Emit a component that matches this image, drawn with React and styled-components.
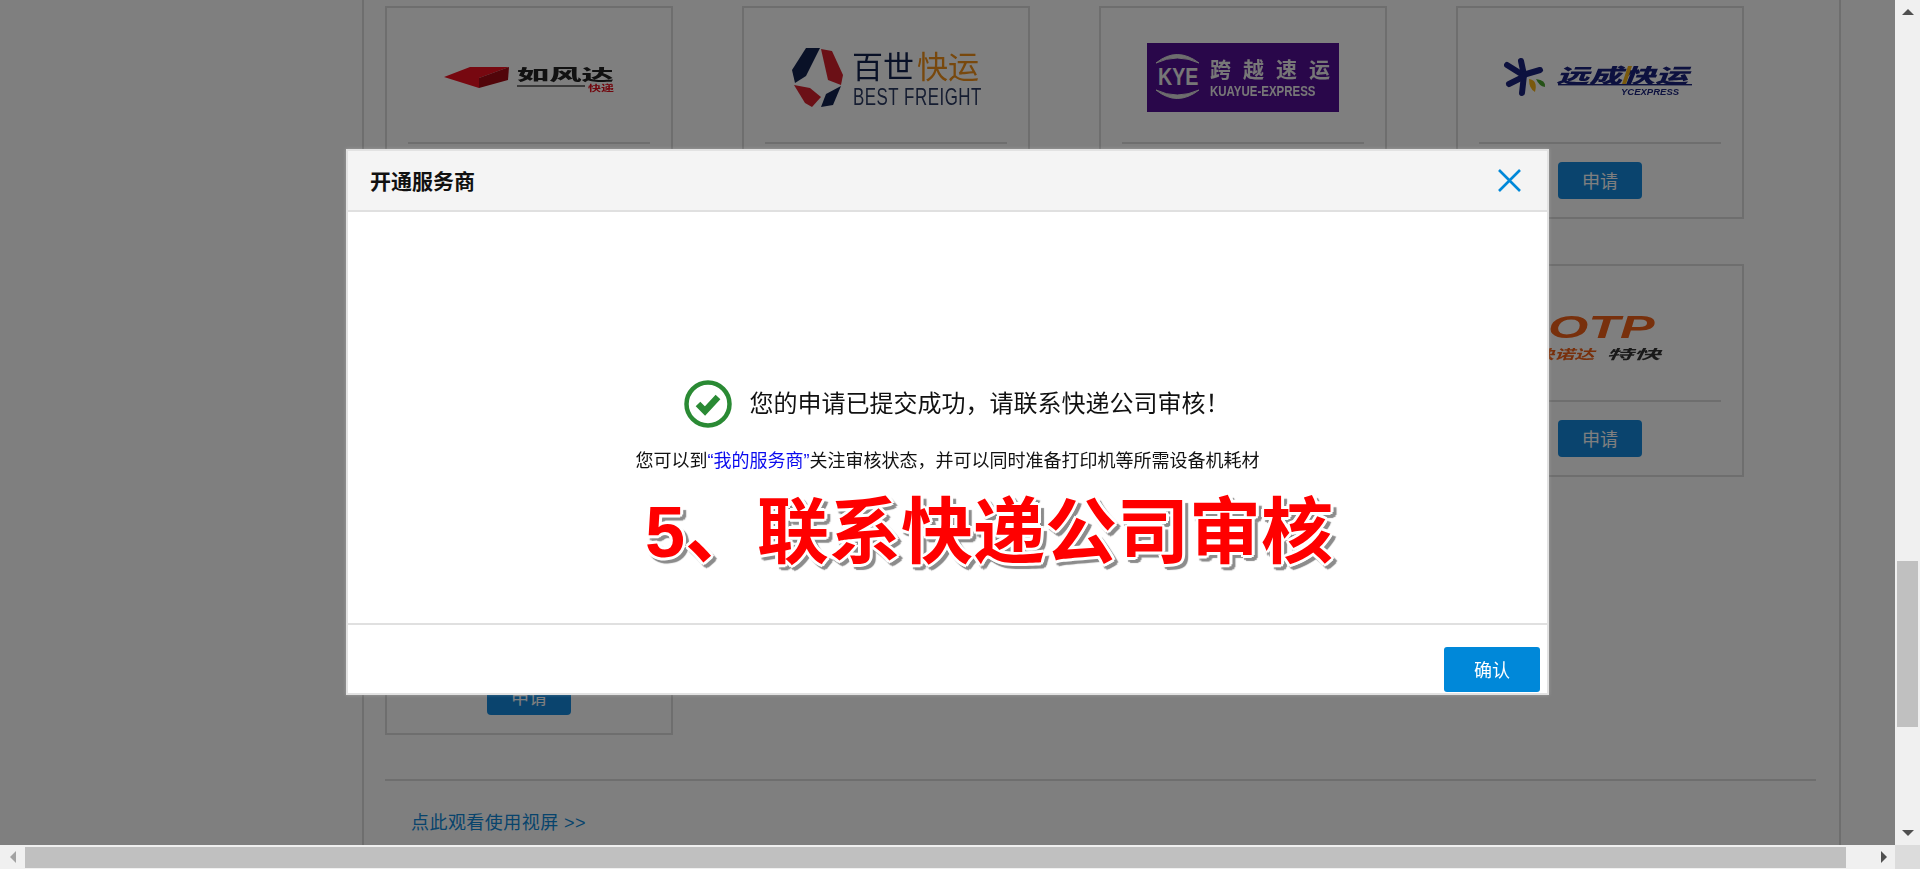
import React from "react";
import styled, { createGlobalStyle } from "styled-components";

const GlobalStyle = createGlobalStyle`
  html, body {
    margin: 0;
    padding: 0;
    overflow: hidden;
    background: #fff;
    font-family: "Liberation Sans", "Noto Sans CJK SC", sans-serif;
  }
  * {
    box-sizing: border-box;
  }
`;

const Screen = styled.div`
  width: 1920px;
  height: 869px;
  display: flex;
  flex-direction: column;
  overflow: hidden;
`;

const TopRow = styled.div`
  display: flex;
  height: 845px;
`;

const Viewport = styled.div`
  position: relative;
  width: 1895px;
  height: 845px;
  overflow: hidden;
  background: #fff;
`;

const Panel = styled.div`
  width: 1479px;
  height: 845px;
  margin-left: 362px;
  padding: 6px 0 0 21px;
  border-left: 2px solid #dcdcdc;
  border-right: 2px solid #dcdcdc;
`;

const CardGrid = styled.div`
  display: grid;
  grid-template-columns: repeat(4, 288px);
  column-gap: 69px;
  row-gap: 45px;
`;

const Card = styled.div`
  height: 213px;
  border: 2px solid #dcdcdc;
  display: flex;
  flex-direction: column;
  align-items: center;
`;

const LogoArea = styled.div`
  height: 134px;
  width: 100%;
  padding-top: 5px;
  display: flex;
  align-items: center;
  justify-content: center;
`;

const LogoSvg = styled.svg`
  display: block;
  filter: blur(0.7px);
`;

const CardLine = styled.div`
  width: 242px;
  height: 2px;
  background: #dcdcdc;
`;

const ApplyButton = styled.button`
  width: 84px;
  height: 37px;
  margin-top: 18px;
  padding: 0 0 2px;
  border: 0;
  border-radius: 4px;
  background: #1489dc;
  color: #fff;
  font: 18px "Liberation Sans", "Noto Sans CJK SC", sans-serif;
`;

const Rule = styled.div`
  width: 1431px;
  height: 2px;
  margin-top: 44px;
  background: #dcdcdc;
`;

const VideoLink = styled.a`
  display: block;
  margin: 30px 0 0 26px;
  font-size: 18px;
  line-height: 24px;
  letter-spacing: 0.45px;
  color: #0f88d8;
`;

const Overlay = styled.div`
  position: absolute;
  inset: 0;
  background: rgba(0, 0, 0, 0.5);
`;

const Modal = styled.div`
  position: absolute;
  left: 346px;
  top: 149px;
  width: 1203px;
  height: 546px;
  display: flex;
  flex-direction: column;
  background: #fff;
  border: 2px solid #e2e2e2;
  box-shadow: 0 0 3px rgba(255, 255, 255, 0.25);
`;

const ModalHeader = styled.div`
  height: 61px;
  flex: none;
  display: flex;
  align-items: center;
  justify-content: space-between;
  padding: 0 26px 0 22px;
  background: #f4f4f4;
  border-bottom: 2px solid #e0e0e0;
`;

const ModalTitle = styled.div`
  font-size: 21px;
  font-weight: 700;
  color: #111;
  margin-bottom: 2px;
`;

const ModalBody = styled.div`
  flex: 1;
  padding-top: 168px;
  display: flex;
  flex-direction: column;
  align-items: center;
`;

const SuccessRow = styled.div`
  display: flex;
  align-items: center;
  gap: 18px;
  height: 48px;
`;

const SuccessText = styled.div`
  font-size: 24px;
  color: #111;
  margin: 0 -18px 6px 0;
`;

const HintText = styled.div`
  margin-top: 20px;
  font-size: 18px;
  line-height: 27px;
  color: #111;
`;

const HintLink = styled.span`
  color: #0a0aee;
`;

const StepBanner = styled.div`
  margin: 17px 0 0 83px;
  font-size: 72px;
  font-weight: 700;
  line-height: 80px;
  color: #f00;
  white-space: nowrap;
  text-shadow:
    3px 0 0 #fff, -3px 0 0 #fff, 0 3px 0 #fff, 0 -3px 0 #fff,
    2px 2px 0 #fff, -2px 2px 0 #fff, 2px -2px 0 #fff, -2px -2px 0 #fff,
    5px 5px 1px #8c8c8c, 3px 6px 1px #8c8c8c, 6px 3px 1px #8c8c8c, 1px 5px 1px #9a9a9a;
`;

const ModalFooter = styled.div`
  height: 70px;
  flex: none;
  display: flex;
  align-items: flex-end;
  justify-content: flex-end;
  padding: 0 7px 1px 0;
  border-top: 2px solid #e0e0e0;
`;

const ConfirmButton = styled.button`
  width: 96px;
  height: 45px;
  padding: 0 0 2px;
  border: 0;
  border-radius: 3px;
  background: #0088d9;
  color: #fff;
  font: 18px "Liberation Sans", "Noto Sans CJK SC", sans-serif;
`;

const VTrack = styled.div`
  width: 25px;
  height: 845px;
  display: flex;
  flex-direction: column;
  align-items: center;
  background: #f0f0f0;
`;

const VThumb = styled.div`
  width: 21px;
  height: 166px;
  flex: none;
  margin: 537px 0 auto;
  background: #c0c0c0;
`;

const HBar = styled.div`
  height: 24px;
  display: flex;
  background: #f0f0f0;
`;

const HThumb = styled.div`
  width: 1821px;
  height: 21px;
  margin-top: 2px;
  background: #c0c0c0;
`;

const ArrowCell = styled.div`
  width: ${(p) => p.$w}px;
  height: 24px;
  flex: none;
  display: flex;
  align-items: center;
  justify-content: center;
  padding-left: ${(p) => p.$pad || 0}px;
`;

const Corner = styled.div`
  width: 25px;
  height: 24px;
  background: #dcdcdc;
`;

const Triangle = styled.div`
  width: 0;
  height: 0;
  border-style: solid;
  border-color: transparent;
  ${(p) =>
    p.$dir === "up" &&
    "border-width: 0 6px 6px 6px; border-bottom-color: #505050;"}
  ${(p) =>
    p.$dir === "down" &&
    "border-width: 6px 6px 0 6px; border-top-color: #505050;"}
  ${(p) =>
    p.$dir === "left" &&
    "border-width: 6px 6px 6px 0; border-right-color: #a3a3a3;"}
  ${(p) =>
    p.$dir === "right" &&
    "border-width: 6px 0 6px 6px; border-left-color: #505050;"}
`;

const cjk = '"Noto Sans CJK SC", sans-serif';
const latin = '"Liberation Sans", sans-serif';

const RufengdaLogo = () => (
  <LogoSvg width="185" height="45" viewBox="0 0 185 45">
    <polygon points="7,22 33,12 72,12 42,23 42,33" fill="#ee1020" />
    <polygon points="72,12 71,25 42,33 42,23" fill="#a40a14" />
    <text transform="translate(80 25) scale(2.15 1)" fontFamily={cjk} fontSize="15" fontWeight="900" fill="#222">如风达</text>
    <rect x="80" y="30" width="68" height="2" fill="#777" />
    <text x="151" y="36" fontFamily={cjk} fontSize="8" fontWeight="700" fill="#e30f1c" textLength="26" lengthAdjust="spacingAndGlyphs">快递</text>
  </LogoSvg>
);

const BestLogo = () => (
  <LogoSvg width="200" height="72" viewBox="0 0 200 72">
    <polygon points="6,28 20,6 34,6 20,34 9,41" fill="#12234f" />
    <polygon points="35,7 46,9 57,33 55,43 42,38" fill="#d6202c" />
    <polygon points="8,43 24,46 35,55 26,65 19,61" fill="#d6202c" />
    <polygon points="40,52 55,44 47,63 35,65" fill="#12234f" />
    <text x="66" y="36" fontFamily={cjk} fontSize="31" fill="#12234f">百世</text>
    <text x="131" y="36" fontFamily={cjk} fontSize="31" fill="#f0911a">快运</text>
    <text transform="translate(67 63) scale(0.735 1)" fontFamily={latin} fontSize="23" fill="#2b3a63" letterSpacing="0.7">BEST FREIGHT</text>
  </LogoSvg>
);

const KyeLogo = () => (
  <LogoSvg width="198" height="75" viewBox="0 0 198 75">
    <rect x="3" y="3" width="192" height="69" fill="#520e94" />
    <path d="M12 23 Q33 6 55 23 Q33 13 12 23Z" fill="#ddd" stroke="#ddd" />
    <path d="M12 50 Q33 67 55 50 Q33 60 12 50Z" fill="#ddd" stroke="#ddd" />
    <text transform="translate(14 45) scale(0.82 1)" fontFamily={latin} fontSize="24" fontWeight="700" fill="#eee">KYE</text>
    <text x="66" y="37" fontFamily={cjk} fontSize="21" fontWeight="700" fill="#eee" letterSpacing="12">跨越速运</text>
    <text transform="translate(66 56) scale(0.82 1)" fontFamily={latin} fontSize="14" fontWeight="700" fill="#eee">KUAYUE-EXPRESS</text>
  </LogoSvg>
);

const YcLogo = () => (
  <LogoSvg width="204" height="50" viewBox="0 0 204 50">
    <g stroke="#1a237e" strokeWidth="6" strokeLinecap="round" fill="none">
      <path d="M9 12 L25 22" />
      <path d="M23 8 L26 22 L24 40" />
      <path d="M25 22 L42 17" />
      <path d="M25 24 L11 31" />
    </g>
    <path d="M31 26 Q40 27 37 39 Q31 36 31 26Z" fill="#f2b21a" />
    <path d="M38 26 Q48 27 47 34 Q41 33 38 26Z" fill="#4aa52e" />
    <text transform="translate(58 30) scale(1.65 1)" fontFamily={cjk} fontSize="20" fontWeight="900" fontStyle="italic" fill="#1a237e">远成</text>
    <text transform="translate(124 30) scale(1.65 1)" fontFamily={cjk} fontSize="20" fontWeight="900" fontStyle="italic" fill="#1a237e">快运</text>
    <polygon points="130,13 134,13 128,31 124,31" fill="#f2b21a" />
    <rect x="60" y="31" width="134" height="1.4" fill="#1a237e" />
    <text x="123" y="42" fontFamily={latin} fontSize="9.5" fontWeight="700" fontStyle="italic" fill="#1a237e">YCEXPRESS</text>
  </LogoSvg>
);

const OtpLogo = () => (
  <LogoSvg width="140" height="70" viewBox="0 -10 140 70">
    <text transform="translate(18 27) scale(1.62 1)" fontFamily={latin} fontSize="32" fontWeight="700" fontStyle="italic" fill="#f06018">OTP</text>
    <text transform="translate(4 48) scale(1.55 1)" fontFamily={cjk} fontSize="13" fontWeight="700" fontStyle="italic" fill="#f06018">快诺达</text>
    <text transform="translate(76 48) scale(2.1 1)" fontFamily={cjk} fontSize="13" fontWeight="700" fontStyle="italic" fill="#333">特快</text>
  </LogoSvg>
);

const ProviderCard = ({ logo }) => (
  <Card>
    <LogoArea>{logo}</LogoArea>
    <CardLine />
    <ApplyButton>申请</ApplyButton>
  </Card>
);

const CheckIcon = () => (
  <svg width="48" height="48" viewBox="0 0 48 48">
    <circle cx="24" cy="24" r="21.5" fill="none" stroke="#2a8a34" strokeWidth="4.5" />
    <path d="M14 24 L21 31 L34 17" fill="none" stroke="#2a8a34" strokeWidth="6.5" />
  </svg>
);

const CloseIcon = () => (
  <svg width="23" height="23" viewBox="0 0 23 23">
    <path d="M1 1 L22 22 M22 1 L1 22" fill="none" stroke="#0088d9" strokeWidth="2.6" />
  </svg>
);

const App = () => {
  return (
    <Screen>
      <GlobalStyle />
      <TopRow>
        <Viewport>
          <Panel>
            <CardGrid>
              <ProviderCard logo={<RufengdaLogo />} />
              <ProviderCard logo={<BestLogo />} />
              <ProviderCard logo={<KyeLogo />} />
              <ProviderCard logo={<YcLogo />} />
              <ProviderCard />
              <ProviderCard />
              <ProviderCard />
              <ProviderCard logo={<OtpLogo />} />
              <ProviderCard />
            </CardGrid>
            <Rule />
            <VideoLink>点此观看使用视屏 &gt;&gt;</VideoLink>
          </Panel>
          <Overlay />
          <Modal>
            <ModalHeader>
              <ModalTitle>开通服务商</ModalTitle>
              <CloseIcon />
            </ModalHeader>
            <ModalBody>
              <SuccessRow>
                <CheckIcon />
                <SuccessText>您的申请已提交成功，请联系快递公司审核！</SuccessText>
              </SuccessRow>
              <HintText>
                您可以到<HintLink>“我的服务商”</HintLink>关注审核状态，并可以同时准备打印机等所需设备机耗材
              </HintText>
              <StepBanner>5、联系快递公司审核</StepBanner>
            </ModalBody>
            <ModalFooter>
              <ConfirmButton>确认</ConfirmButton>
            </ModalFooter>
          </Modal>
        </Viewport>
        <VTrack>
          <ArrowCell $w={25}>
            <Triangle $dir="up" />
          </ArrowCell>
          <VThumb />
          <ArrowCell $w={25}>
            <Triangle $dir="down" />
          </ArrowCell>
        </VTrack>
      </TopRow>
      <HBar>
        <ArrowCell $w={25}>
          <Triangle $dir="left" />
        </ArrowCell>
        <HThumb />
        <ArrowCell $w={49} $pad={26}>
          <Triangle $dir="right" />
        </ArrowCell>
        <Corner />
      </HBar>
    </Screen>
  );
};

export default App;
